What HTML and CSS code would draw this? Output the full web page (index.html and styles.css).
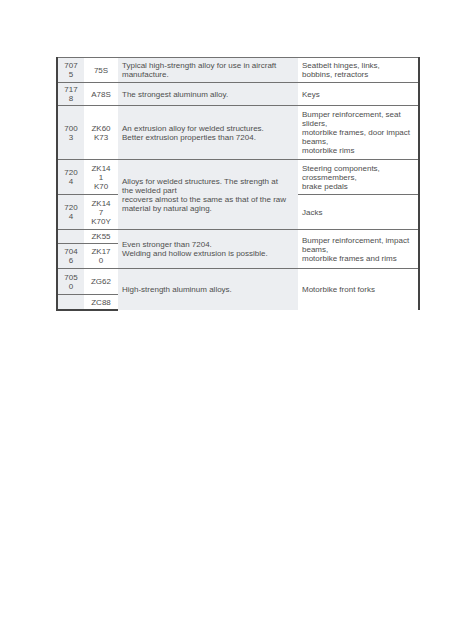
FILE: index.html
```html
<!DOCTYPE html>
<html>
<head>
<meta charset="utf-8">
<link rel="stylesheet" href="styles.css">
</head>
<body>
<table class="alloys">
  <colgroup>
    <col class="c-num">
    <col class="c-code">
    <col class="c-desc">
    <col class="c-use">
  </colgroup>
  <tr class="r-a">
    <td class="num">707<br>5</td>
    <td class="code">75S</td>
    <td class="desc">Typical high-strength alloy for use in aircraft<br>manufacture.</td>
    <td class="use">Seatbelt hinges, links,<br>bobbins, retractors</td>
  </tr>
  <tr class="r-b">
    <td class="num">717<br>8</td>
    <td class="code">A78S</td>
    <td class="desc">The strongest aluminum alloy.</td>
    <td class="use">Keys</td>
  </tr>
  <tr class="r-c">
    <td class="num">700<br>3</td>
    <td class="code">ZK60<br>K73</td>
    <td class="desc">An extrusion alloy for welded structures.<br>Better extrusion properties than 7204.</td>
    <td class="use">Bumper reinforcement, seat<br>sliders,<br>motorbike frames, door impact<br>beams,<br>motorbike rims</td>
  </tr>
  <tr class="r-d">
    <td class="num">720<br>4</td>
    <td class="code">ZK14<br>1<br>K70</td>
    <td class="desc" rowspan="2">Alloys for welded structures. The strength at<br>the welded part<br>recovers almost to the same as that of the raw<br>material by natural aging.</td>
    <td class="use">Steering components,<br>crossmembers,<br>brake pedals</td>
  </tr>
  <tr class="r-e">
    <td class="num">720<br>4</td>
    <td class="code">ZK14<br>7<br>K70Y</td>
    <td class="use">Jacks</td>
  </tr>
  <tr class="r-f">
    <td class="num"></td>
    <td class="code">ZK55</td>
    <td class="desc" rowspan="2">Even stronger than 7204.<br>Welding and hollow extrusion is possible.</td>
    <td class="use" rowspan="2">Bumper reinforcement, impact<br>beams,<br>motorbike frames and rims</td>
  </tr>
  <tr class="r-g">
    <td class="num">704<br>6</td>
    <td class="code">ZK17<br>0</td>
  </tr>
  <tr class="r-h">
    <td class="num">705<br>0</td>
    <td class="code">ZG62</td>
    <td class="desc open" rowspan="2">High-strength aluminum alloys.</td>
    <td class="use open" rowspan="2">Motorbike front forks</td>
  </tr>
  <tr class="r-i">
    <td class="num last"></td>
    <td class="code last">ZC88</td>
  </tr>
</table>
</body>
</html>
```
FILE: styles.css
```css
html, body {
  margin: 0;
  padding: 0;
  background: #ffffff;
}

.alloys {
  margin: 57px 0 0 56px;
  border-collapse: collapse;
  table-layout: fixed;
  width: 362px;
  font-family: "Liberation Sans", Arial, sans-serif;
  font-size: 8px;
  line-height: 9px;
  color: #4e4e4e;
}

.c-num { width: 27px; }
.c-code { width: 34px; }
.c-desc { width: 180px; }
.c-use { width: 121px; }

.alloys td {
  padding: 0 2px;
  vertical-align: middle;
  border-top: 1px solid #727272;
  border-bottom: 1px solid #727272;
  white-space: nowrap;
  overflow: hidden;
}

.alloys .num {
  text-align: center;
  background: #eceef1;
  border-left: 2px solid #444444;
}

.alloys .code {
  text-align: center;
  background: #ffffff;
}

.alloys .desc {
  text-align: left;
  padding-left: 4px;
  background: #eceef1;
}

.alloys .use {
  text-align: left;
  padding-left: 4px;
  background: #ffffff;
  border-right: 2px solid #444444;
}

.alloys .open {
  border-bottom: 0;
}

.alloys .last {
  border-bottom: 2px solid #444444;
}

.r-a td { height: 24px; }
.r-b td { height: 22px; }
.r-c td { height: 53px; }
.r-d td { height: 34px; }
.r-e td { height: 34px; }
.r-f td { height: 13px; }
.r-g td { height: 24px; }
.r-h td { height: 25px; }
.r-i td { height: 14px; }
```
